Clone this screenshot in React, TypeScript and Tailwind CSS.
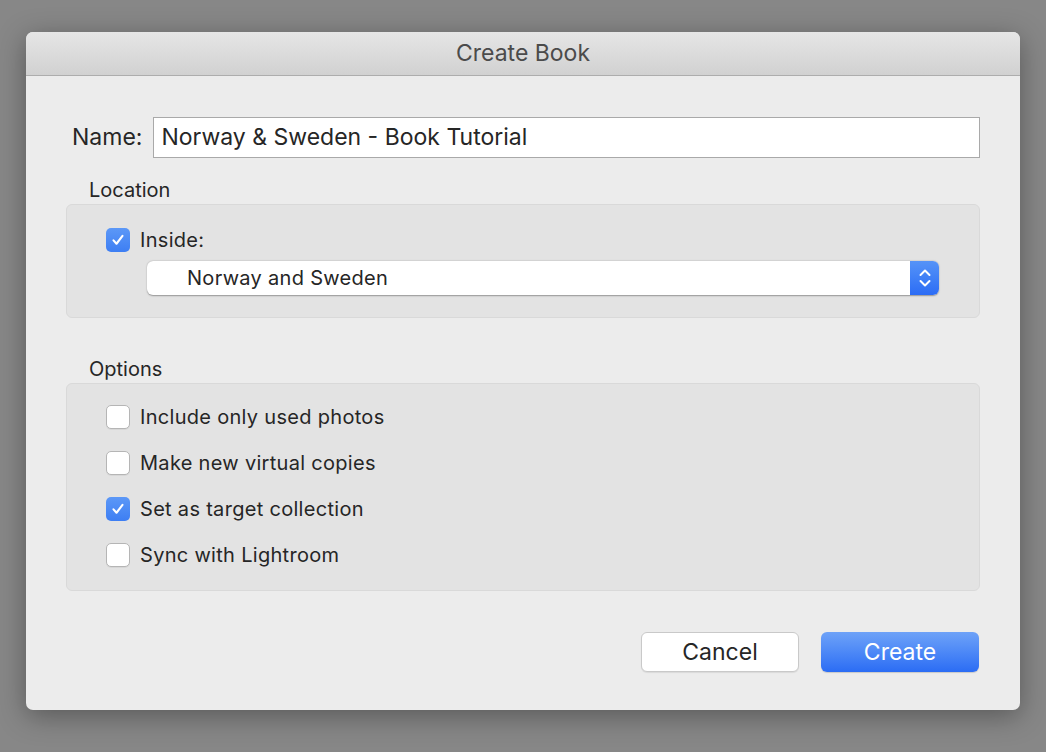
import React from "react"

function Check({ checked }: { checked: boolean }) {
  if (checked) {
    return (
      <div className="flex h-6 w-6 shrink-0 items-center justify-center rounded-[5px] bg-gradient-to-b from-[#5c98f7] to-[#3d7ef3]">
        <svg viewBox="0 0 24 24" className="h-[18px] w-[18px]" fill="none" stroke="white" strokeWidth="2.8" strokeLinecap="round" strokeLinejoin="round">
          <path d="M6 12.5 L10 17 L18 6.5" />
        </svg>
      </div>
    )
  }
  return <div className="h-6 w-6 shrink-0 rounded-[5px] border border-[#b5b5b5] bg-white shadow-[0_1px_0_rgba(0,0,0,0.05)]" />
}

function Row({ label, checked }: { label: string; checked?: boolean }) {
  return (
    <div className="flex h-[46px] items-center gap-[10px]">
      <Check checked={!!checked} />
      <span className="text-[20px] tracking-[0.3px] text-[#262626]">{label}</span>
    </div>
  )
}

export default function App() {
  return (
    <div
      className="flex h-[752px] w-[1046px] items-start justify-center bg-[#878787] pt-[32px]"
      style={{ fontFamily: "Inter, 'Open Sans', 'Liberation Sans', sans-serif" }}
    >
      <div className="flex h-[678px] w-[994px] flex-col overflow-hidden rounded-[7px] bg-[#ececec] shadow-[0_6px_28px_rgba(0,0,0,0.35)]">
        {/* Title bar */}
        <div className="flex h-[44px] shrink-0 items-center justify-center border-b border-[#adadad] bg-gradient-to-b from-[#e6e6e6] to-[#d1d1d1]">
          <span className="text-[23px] text-[#4b4b4b]">Create Book</span>
        </div>

        <div className="flex flex-1 flex-col px-[40px] pt-[41px]">
          {/* Name */}
          <div className="flex items-center gap-[11px] pl-[6px]">
            <span className="text-[23px] text-[#262626]">Name:</span>
            <div className="flex h-[41px] flex-1 items-center border border-[#a9a9a9] bg-white pl-[7px]">
              <span className="text-[23px] text-[#262626]">Norway &amp; Sweden - Book Tutorial</span>
            </div>
          </div>

          {/* Location */}
          <div className="mt-[19px] pl-[23px] text-[20px] leading-[26px] text-[#262626]">Location</div>
          <div className="mt-[1px] h-[114px] rounded-[6px] border border-[#d9d9d9] bg-[#e3e3e3] pl-[39px] pr-[40px] pt-[12px]">
            <Row label="Inside:" checked />
            <div className="ml-[41px] mt-[-2px] flex h-[34px] items-stretch overflow-hidden rounded-[6px] bg-white shadow-[0_0.5px_1.5px_rgba(0,0,0,0.35)]">
              <div className="flex flex-1 items-center pl-[40px] text-[20px] tracking-[0.3px] text-[#262626]">Norway and Sweden</div>
              <div className="flex w-[29px] items-center justify-center bg-gradient-to-b from-[#5593f7] to-[#2c6cf5]">
                <svg viewBox="0 0 16 22" className="h-[22px] w-[16px]" fill="none" stroke="white" strokeWidth="2" strokeLinecap="round" strokeLinejoin="round">
                  <path d="M3.5 8 L8 3.5 L12.5 8" />
                  <path d="M3.5 14 L8 18.5 L12.5 14" />
                </svg>
              </div>
            </div>
          </div>

          {/* Options */}
          <div className="mt-[38px] pl-[23px] text-[20px] leading-[26px] text-[#262626]">Options</div>
          <div className="mt-[1px] h-[208px] rounded-[6px] border border-[#d9d9d9] bg-[#e3e3e3] pl-[39px] pt-[10px]">
            <Row label="Include only used photos" />
            <Row label="Make new virtual copies" />
            <Row label="Set as target collection" checked />
            <Row label="Sync with Lightroom" />
          </div>

          {/* Buttons */}
          <div className="mt-[41px] flex justify-end gap-[22px] pr-[1px]">
            <button className="h-[40px] w-[158px] rounded-[6px] border border-[#c9c9c9] bg-white text-[23px] text-[#262626] shadow-[0_1px_1px_rgba(0,0,0,0.08)]">
              Cancel
            </button>
            <button className="h-[40px] w-[158px] rounded-[6px] bg-gradient-to-b from-[#6ea2f8] to-[#2b6cf4] text-[23px] text-white shadow-[0_1px_1px_rgba(0,0,0,0.15)]">
              Create
            </button>
          </div>
        </div>
      </div>
    </div>
  )
}
